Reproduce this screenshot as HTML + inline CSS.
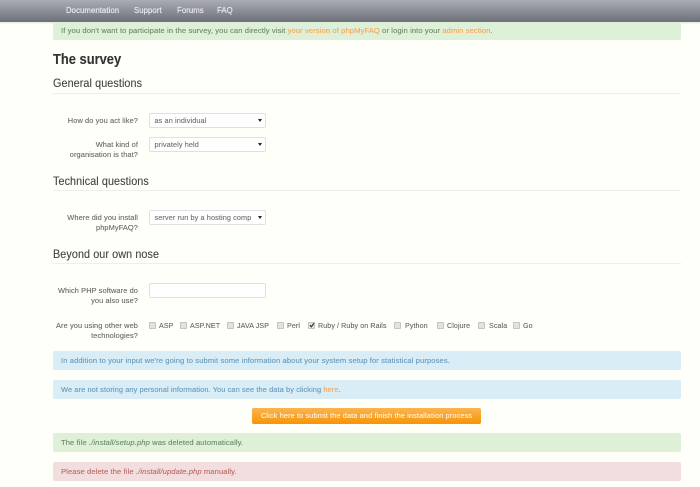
<!DOCTYPE html>
<html><head><meta charset="utf-8">
<style>
html,body{margin:0;padding:0}
body{width:700px;height:487px;overflow:hidden;background:#fffffa;position:relative;font-family:"Liberation Sans",sans-serif;font-size:7.6px;color:#555;letter-spacing:.1px;-webkit-text-stroke:.12px}
#w{position:absolute;left:0;top:0;width:700px;height:487px;filter:blur(.35px)}
.t{position:absolute;white-space:nowrap;line-height:10px}
.nav{position:absolute;left:0;top:0;width:700px;height:22px;background:linear-gradient(#a9abb5,#6d7079);box-shadow:0 1px 2px rgba(0,0,0,.12)}
.nav .t{color:#e6e8ec;top:6px;font-size:7.8px;letter-spacing:.05px;-webkit-text-stroke:.2px}
.al{position:absolute;left:53px;width:628px;border-radius:2px;box-sizing:border-box;padding-left:8px;line-height:19px;height:19px;white-space:nowrap}
.g{background:#dff0d8;color:#6b8c66}
.b{background:#d9edf7;color:#679bbb}
.r{background:#f2dede;color:#bb6a66}
a{color:#f8a555}
.h2{position:absolute;left:53px;font-size:11.6px;line-height:14px;color:#444;white-space:nowrap;letter-spacing:.1px;transform:scaleX(.93);transform-origin:0 0}
.hr{position:absolute;left:53px;width:628px;height:1px;background:#eeeeea}
.l{position:absolute;right:562px;text-align:right;line-height:10px;white-space:nowrap;color:#686868;font-size:7.4px}
.s{position:absolute;left:149px;width:117px;height:15px;box-sizing:border-box;border:1px solid #e0e0e0;border-radius:2px;background:#fff;line-height:14px;padding-left:4.5px;color:#707070;overflow:hidden;white-space:nowrap;font-size:7.3px}
.s i{position:absolute;right:0;top:0;width:13px;height:13px;background:#fff}
.s i:after{content:"";position:absolute;left:6px;top:5px;border:2.2px solid transparent;border-top:3px solid #222;border-bottom:0}
.c{position:absolute;top:322px;width:5px;height:5px;border:1px solid #c4c4c4;border-radius:1px;background:#e2e2e2}
.cl{position:absolute;top:320.5px;line-height:10px;white-space:nowrap;color:#686868;font-size:7.1px;letter-spacing:.1px}
</style></head><body><div id="w">
<div class="nav">
<span class="t" style="left:66px">Documentation</span>
<span class="t" style="left:134px">Support</span>
<span class="t" style="left:177px">Forums</span>
<span class="t" style="left:217px">FAQ</span>
</div>
<div class="al g" style="top:22px;height:18px;line-height:18px">If you don't want to participate in the survey, you can directly visit <a>your version of phpMyFAQ</a> or login into your <a>admin section</a>.</div>

<div class="t" style="left:53px;top:52px;font-size:14.5px;line-height:16px;color:#333;font-weight:bold;letter-spacing:0;transform:scaleX(.89);transform-origin:0 0">The survey</div>

<div class="h2" style="top:77px">General questions</div>
<div class="hr" style="top:93px"></div>
<div class="l" style="top:116px">How do you act like?</div>
<div class="s" style="top:113px">as an individual<i></i></div>
<div class="l" style="top:140px">What kind of<br>organisation is that?</div>
<div class="s" style="top:137px">privately held<i></i></div>

<div class="h2" style="top:175px">Technical questions</div>
<div class="hr" style="top:190px"></div>
<div class="l" style="top:213px">Where did you install<br>phpMyFAQ?</div>
<div class="s" style="top:210px">server run by a hosting comp<i></i></div>

<div class="h2" style="top:248px">Beyond our own nose</div>
<div class="hr" style="top:263px"></div>
<div class="l" style="top:286px">Which PHP software do<br>you also use?</div>
<div class="s" style="top:283px"></div>
<div class="l" style="top:320.5px">Are you using other web<br>technologies?</div>

<span class="c" style="left:149px"></span><span class="cl" style="left:159px">ASP</span>
<span class="c" style="left:180px"></span><span class="cl" style="left:190px">ASP.NET</span>
<span class="c" style="left:227px"></span><span class="cl" style="left:237px">JAVA JSP</span>
<span class="c" style="left:277px"></span><span class="cl" style="left:287px">Perl</span>
<span class="c" style="left:308px"></span><span class="cl" style="left:318px">Ruby / Ruby on Rails</span>
<span class="c" style="left:394px"></span><span class="cl" style="left:405px">Python</span>
<span class="c" style="left:437px"></span><span class="cl" style="left:447px">Clojure</span>
<span class="c" style="left:478px"></span><span class="cl" style="left:489px">Scala</span>
<span class="c" style="left:513px"></span><span class="cl" style="left:523px">Go</span>
<svg style="position:absolute;left:308px;top:321px" width="8" height="8"><path d="M2 4.2L3.4 5.8L6 2.2" stroke="#333" stroke-width="1.2" fill="none"/></svg>

<div class="al b" style="top:351px">In addition to your input we're going to submit some information about your system setup for statistical purposes.</div>
<div class="al b" style="top:380px;font-size:7.4px">We are not storing any personal information. You can see the data by clicking <a>here</a>.</div>
<div style="position:absolute;left:252px;top:408px;width:229px;height:16px;border-radius:2px;background:linear-gradient(#fbb450,#f89406);color:#fff4e0;line-height:16px;text-align:center;white-space:nowrap;font-size:7.4px">Click here to submit the data and finish the installation process</div>
<div class="al g" style="top:433px">The file <i>./install/setup.php</i> was deleted automatically.</div>
<div class="al r" style="top:462px">Please delete the file <i>./install/update.php</i> manually.</div>
</div></body></html>
